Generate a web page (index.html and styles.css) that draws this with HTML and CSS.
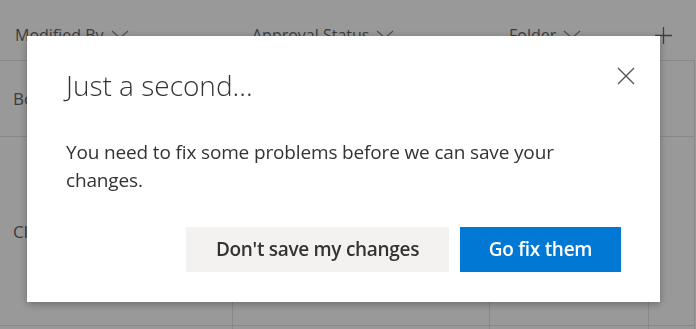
FILE: index.html
```html
<!DOCTYPE html>
<html lang="en">
<head>
  <meta charset="UTF-8" />
  <meta name="viewport" content="width=device-width, initial-scale=1.0" />
  <title>Documents - Just a second</title>
  <link rel="stylesheet" href="styles.css">
</head>
<body>
  <div class="list">
    <div class="list-head">
      <div class="head-cell">Modified By
        <svg class="chevron" viewBox="0 0 18 9"><polyline points="1,1 9,8 17,1" /></svg>
      </div>
      <div class="head-cell">Approval Status
        <svg class="chevron" viewBox="0 0 18 9"><polyline points="1,1 9,8 17,1" /></svg>
      </div>
      <div class="head-cell">Folder
        <svg class="chevron" viewBox="0 0 18 9"><polyline points="1,1 9,8 17,1" /></svg>
      </div>
      <div class="head-cell head-add">
        <svg class="plus" viewBox="0 0 17 17"><path d="M8.5 0 V17 M0 8.5 H17" /></svg>
      </div>
    </div>

    <div class="list-row row-short">
      <div class="cell">Bob Kelly</div>
      <div class="cell">Approved</div>
      <div class="cell">Reports</div>
      <div class="cell"></div>
    </div>
    <div class="list-row row-tall">
      <div class="cell">Claire Adams</div>
      <div class="cell">Pending</div>
      <div class="cell">Drafts</div>
      <div class="cell"></div>
    </div>
    <div class="list-row row-short">
      <div class="cell"></div>
      <div class="cell"></div>
      <div class="cell"></div>
      <div class="cell"></div>
    </div>
  </div>

  <!-- Blocking dialog shown over the list -->
  <div class="overlay">
    <div class="dialog" role="dialog" aria-labelledby="dialogTitle">
      <div class="dialog-head">
        <h2 id="dialogTitle" class="dialog-title">Just a second...</h2>
        <button class="close-btn" aria-label="Close">
          <svg viewBox="0 0 18 18"><path d="M1 1 L17 17 M17 1 L1 17" /></svg>
        </button>
      </div>
      <p class="dialog-text">You need to fix some problems before we can save your changes.</p>
      <div class="dialog-actions">
        <button class="btn btn-default">Don't save my changes</button>
        <button class="btn btn-primary">Go fix them</button>
      </div>
    </div>
  </div>
</body>
</html>
```

FILE: styles.css
```css
* {
  margin: 0;
  padding: 0;
  box-sizing: border-box;
  font-family: 'Open Sans', 'Noto Sans', sans-serif;
}

html,
body {
  overflow: hidden;
}

body {
  background: #fff;
  color: #666;
  width: 696px;
  height: 329px;
}

/* list behind the dialog */
.list {
  width: 695px;
  height: 329px;
  overflow: hidden;
}

.list-head,
.list-row {
  display: grid;
  grid-template-columns: 233px 257px 159px 46px;
}

.list-head {
  height: 61px;
  border-bottom: 1px solid #e3e3e3;
}

.head-cell {
  display: flex;
  align-items: flex-start;
  gap: 7px;
  padding: 24px 0 0 19px;
  font-size: 16px;
  line-height: 22px;
  color: #666;
}

.head-cell:first-child {
  padding-left: 15px;
}

.head-add {
  padding: 27px 0 0 6px;
}

.chevron {
  width: 18px;
  height: 9px;
  margin-top: 6px;
  fill: none;
  stroke: #8a8a8a;
  stroke-width: 1.2;
}

.plus {
  width: 17px;
  height: 17px;
  fill: none;
  stroke: #666;
  stroke-width: 1.3;
}

.list-row {
  border-bottom: 1px solid #e3e3e3;
}

.row-short {
  height: 76px;
}

.row-tall {
  height: 189px;
}

.cell {
  display: flex;
  align-items: center;
  padding-left: 13px;
  border-right: 1px solid #e3e3e3;
  font-size: 17px;
  white-space: nowrap;
  overflow: hidden;
}

/* dialog */
.overlay {
  position: fixed;
  inset: 0;
  background: rgba(0, 0, 0, 0.4);
  padding: 36px 0 0 27px;
}

.dialog {
  width: 633px;
  height: 266px;
  background: #fff;
  padding: 31px 39px 30px 39px;
  box-shadow: 0 2px 8px rgba(0, 0, 0, 0.3);
  display: flex;
  flex-direction: column;
}

.dialog-head {
  display: flex;
  justify-content: space-between;
  align-items: flex-start;
}

.dialog-title {
  font-size: 28px;
  font-weight: 300;
  line-height: 36px;
  color: #333;
}

.close-btn {
  width: 18px;
  height: 18px;
  margin-right: -14px;
  border: none;
  background: none;
  cursor: pointer;
}

.close-btn svg {
  display: block;
  width: 18px;
  height: 18px;
  fill: none;
  stroke: #555;
  stroke-width: 1.4;
}

.dialog-text {
  margin-top: 35px;
  font-size: 19px;
  letter-spacing: -0.15px;
  line-height: 28px;
  color: #333;
}

.dialog-actions {
  margin-top: auto;
  display: flex;
  justify-content: flex-end;
  gap: 11px;
}

.btn {
  height: 45px;
  border: none;
  font-size: 19px;
  font-weight: 600;
  letter-spacing: -0.3px;
  line-height: 45px;
  cursor: pointer;
}

.btn-default {
  width: 263px;
  background: #f3f2f1;
  color: #333;
}

.btn-primary {
  width: 161px;
  background: #0078d4;
  color: #fff;
}
```
